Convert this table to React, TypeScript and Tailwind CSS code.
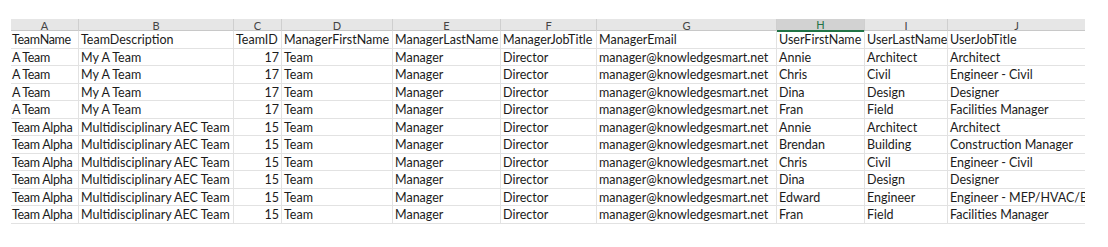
const cols = ['A', 'B', 'C', 'D', 'E', 'F', 'G', 'H', 'I', 'J']

const header = [
  'TeamName',
  'TeamDescription',
  'TeamID',
  'ManagerFirstName',
  'ManagerLastName',
  'ManagerJobTitle',
  'ManagerEmail',
  'UserFirstName',
  'UserLastName',
  'UserJobTitle',
]

const users = [
  ['Annie', 'Architect', 'Architect'],
  ['Chris', 'Civil', 'Engineer - Civil'],
  ['Dina', 'Design', 'Designer'],
  ['Fran', 'Field', 'Facilities Manager'],
]

const alphaUsers = [
  ['Annie', 'Architect', 'Architect'],
  ['Brendan', 'Building', 'Construction Manager'],
  ['Chris', 'Civil', 'Engineer - Civil'],
  ['Dina', 'Design', 'Designer'],
  ['Edward', 'Engineer', 'Engineer - MEP/HVAC/Building Services'],
  ['Fran', 'Field', 'Facilities Manager'],
]

const rows = [
  ...users.map(u => ['A Team', 'My A Team', '17', 'Team', 'Manager', 'Director', 'manager@knowledgesmart.net', ...u]),
  ...alphaUsers.map(u => [
    'Team Alpha',
    'Multidisciplinary AEC Team',
    '15',
    'Team',
    'Manager',
    'Director',
    'manager@knowledgesmart.net',
    ...u,
  ]),
]

const grid = 'grid grid-cols-[68px_155px_48px_111px_108px_96px_180px_88px_83px_137px]'

export default function App() {
  return (
    <div className="w-[1108px] h-[247px] bg-white pt-[19px] pl-[11px] font-['Lato',sans-serif] text-[12.5px] text-[#1b1b1b] overflow-hidden">
      {/* column letters */}
      <div className={`${grid} h-[12px] bg-[#e6e6e6] border-b border-[#c8c8c8] w-fit`}>
        {cols.map((c, i) => (
          <div
            key={c}
            className={`flex items-center justify-center text-[11px] leading-none border-r border-[#cfcfcf] ${
              c === 'H' ? 'bg-[#d2d2d2] text-[#217346] border-b-2 border-b-[#217346]' : 'text-[#444]'
            } ${i === cols.length - 1 ? 'border-r-0' : ''}`}
          >
            {c}
          </div>
        ))}
      </div>

      {[header, ...rows].map((r, ri) => (
        <div key={ri} className={`${grid} h-[17.5px] border-b border-[#e2e2e2] w-fit`}>
          {r.map((v, ci) => (
            <div
              key={ci}
              className={`overflow-hidden whitespace-nowrap leading-[17px] border-r border-[#e2e2e2] ${
                ci === 0 ? 'pl-[1px] tracking-[-0.3px]' : 'px-[2px]'
              } ${ci === 2 && ri > 0 ? 'text-right' : ''} ${ci === r.length - 1 ? 'border-r-0' : ''}`}
            >
              {v}
            </div>
          ))}
        </div>
      ))}
    </div>
  )
}
